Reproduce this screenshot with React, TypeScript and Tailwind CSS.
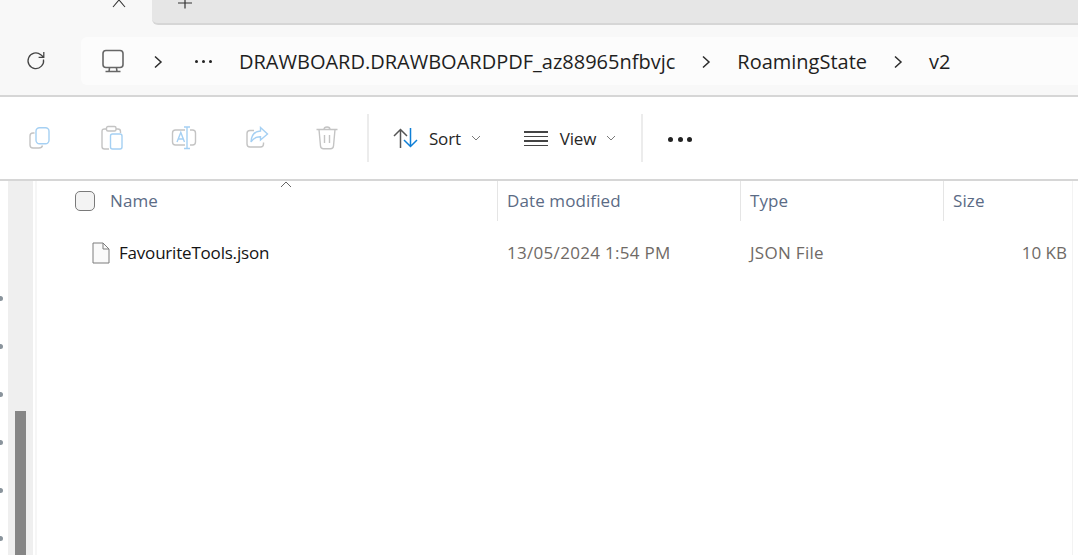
const font = { fontFamily: '"Open Sans", "Noto Sans", sans-serif' };

function Chevron() {
  return (
    <svg width="10" height="14" viewBox="0 0 10 14" fill="none" stroke="#2b2b2b" strokeWidth="1.5" className="shrink-0 mt-[2px]">
      <path d="M2 1.5 L8 7 L2 12.5" />
    </svg>
  );
}

function SmallChevron() {
  return (
    <svg width="10" height="6" viewBox="0 0 10 6" fill="none" stroke="#7a7a7a" strokeWidth="1" className="shrink-0">
      <path d="M1 1 L5 5 L9 1" />
    </svg>
  );
}

function CopyIcon() {
  return (
    <svg width="24" height="24" viewBox="0 0 24 24" fill="none" strokeWidth="1.4">
      <path d="M6.5 7 H5 Q2 7 2 10 V19 Q2 22 5 22 H11 Q14 22 14.5 19.5" stroke="#c4c4c4" />
      <rect x="8" y="1.7" width="13" height="16" rx="3.5" stroke="#a5d0f3" />
    </svg>
  );
}
function PasteIcon() {
  return (
    <svg width="24" height="26" viewBox="0 0 24 26" fill="none" strokeWidth="1.4">
      <path d="M6.5 4 H4.5 Q2 4 2 6.5 V21.5 Q2 24 4.5 24 H9" stroke="#c4c4c4" />
      <path d="M16 4 H18 Q20.5 4 20.5 6.5 V8" stroke="#c4c4c4" />
      <rect x="6.5" y="1.5" width="9.5" height="4.5" rx="1.5" stroke="#c4c4c4" />
      <rect x="10.5" y="9" width="11.5" height="15" rx="2" stroke="#a5d0f3" />
    </svg>
  );
}
function RenameIcon() {
  return (
    <svg width="26" height="24" viewBox="0 0 26 24" fill="none" strokeWidth="1.4">
      <path d="M14 4 H4.5 Q1.5 4 1.5 7 V16 Q1.5 19 4.5 19 H14" stroke="#c4c4c4" />
      <path d="M19 4 H21.5 Q24.5 4 24.5 7 V16 Q24.5 19 21.5 19 H19" stroke="#c4c4c4" />
      <path d="M13 1 H19 M16 1 V22.5 M13 22.5 H19" stroke="#a5d0f3" />
      <path d="M6 16 L9.8 6.5 L13.5 16 M7.2 13 H12.4" stroke="#a5d0f3" />
    </svg>
  );
}
function ShareIcon() {
  return (
    <svg width="24" height="24" viewBox="0 0 24 24" fill="none" strokeWidth="1.4">
      <path d="M9 4.5 H5 Q2 4.5 2 7.5 V18 Q2 21 5 21 H15.5 Q18.5 21 18.5 18 V16.5" stroke="#c4c4c4" />
      <path d="M15.5 1.5 L22.5 8 L15.5 14 V10.7 Q9 10.5 6 16 Q6.5 5.5 15.5 5 Z" stroke="#a5d0f3" />
    </svg>
  );
}
function TrashIcon() {
  return (
    <svg width="22" height="24" viewBox="0 0 22 24" fill="none" stroke="#c4c4c4" strokeWidth="1.4">
      <path d="M0.5 3.5 H21.5 M8 3.5 Q8 1 11 1 Q14 1 14 3.5" />
      <path d="M3 3.5 L4.5 20 Q4.7 22.7 7.5 22.7 H14.5 Q17.3 22.7 17.5 20 L19 3.5" />
      <path d="M8.5 9 V17 M13.5 9 V17" />
    </svg>
  );
}

function ToolIcon({ children, w }: { children: React.ReactNode; w: string }) {
  return <div className={`flex items-center justify-center ${w}`}>{children}</div>;
}

function Divider() {
  return <div className="h-[48px] w-[2px] bg-[#ececec] shrink-0" />;
}

function HeaderCell({ label, w }: { label: string; w: string }) {
  return (
    <div className={`h-[40px] ${w} shrink-0 border-r border-[#e5e5e5] flex items-center pl-[9px] text-[#5b6b85] text-[17px] tracking-[0.1px]`}>
      {label}
    </div>
  );
}

export default function App() {
  return (
    <div className="w-[1078px] h-[555px] overflow-hidden bg-white flex flex-col" style={font}>
      {/* tab strip */}
      <div className="h-[25px] bg-[#f8f8f8] flex shrink-0">
        <div className="w-[152px] h-full relative shrink-0">
          <svg width="14" height="8" viewBox="0 0 14 8" fill="none" stroke="#333" strokeWidth="1.1" className="absolute left-[112px] top-0">
            <path d="M1 7 L7 0 L13 7" />
          </svg>
        </div>
        <div className="flex-1 h-[25px] bg-[#e6e6e6] border-b-2 border-[#d6d6d6] rounded-bl-[6px] relative">
          <svg width="16" height="10" viewBox="0 0 16 10" fill="none" stroke="#333" strokeWidth="1.2" className="absolute left-[25px] top-0">
            <path d="M8 0 V8.5 M1 3 H15" />
          </svg>
        </div>
      </div>

      {/* address bar */}
      <div className="h-[72px] shrink-0 bg-[#f8f8f8] border-b-2 border-[#d6d6d6] flex items-start pt-[12px]">
        <div className="w-[81px] h-[48px] flex items-center shrink-0 pl-[26px]">
          <svg width="20" height="20" viewBox="0 0 20 20" fill="none" stroke="#444" strokeWidth="1.25">
            <path d="M17.5 8.5 A7.8 7.8 0 1 1 14.8 3.8 L17.8 6.3 M17.8 1 V6.3 H12.6" />
          </svg>
        </div>
        <div className="flex-1 h-[48px] bg-[#fcfcfc] rounded-l-[6px] flex items-center text-[#1f1f1f] text-[20px]">
          <svg width="24" height="24" viewBox="0 0 24 24" fill="none" stroke="#666" strokeWidth="1.6" className="ml-[20px] shrink-0">
            <rect x="2" y="1.5" width="20" height="17" rx="3" />
            <path d="M8.5 19 L8 22.5 M15.5 19 L16 22.5 M4.5 22.5 H19.5" />
          </svg>
          <div className="ml-[28px] flex"><Chevron /></div>
          <div className="ml-[32px] flex gap-[4px] shrink-0">
            <span className="w-[3px] h-[3px] rounded-full bg-[#222]" />
            <span className="w-[3px] h-[3px] rounded-full bg-[#222]" />
            <span className="w-[3px] h-[3px] rounded-full bg-[#222]" />
          </div>
          <span className="ml-[27px] pt-[1px]">DRAWBOARD.DRAWBOARDPDF_az88965nfbvjc</span>
          <div className="ml-[26px] flex"><Chevron /></div>
          <span className="ml-[26px] pt-[1px]">RoamingState</span>
          <div className="ml-[26px] flex"><Chevron /></div>
          <span className="ml-[26px] pt-[1px]">v2</span>
        </div>
      </div>

      {/* toolbar */}
      <div className="h-[84px] shrink-0 bg-white border-b-2 border-[#d6d6d6] flex items-center text-[#262626] text-[17px] tracking-[-0.2px]">
        <div className="flex items-center ml-[28px] gap-[47.5px]">
          <ToolIcon w="w-[24px]"><CopyIcon /></ToolIcon>
          <ToolIcon w="w-[24px]"><PasteIcon /></ToolIcon>
          <ToolIcon w="w-[26px]"><RenameIcon /></ToolIcon>
          <ToolIcon w="w-[24px]"><ShareIcon /></ToolIcon>
          <ToolIcon w="w-[22px]"><TrashIcon /></ToolIcon>
        </div>
        <div className="ml-[29px]"><Divider /></div>
        <svg width="26" height="20" viewBox="0 0 26 20" fill="none" strokeWidth="1.5" className="ml-[24px] shrink-0">
          <path d="M7.5 20 V1.5 M1 8 L7.5 1.5 L14 8" stroke="#555" />
          <path d="M17.5 0 V18.5 M11 12 L17.5 18.5 L24 12" stroke="#0f7fd6" />
        </svg>
        <span className="ml-[10px] pt-[2px]">Sort</span>
        <div className="ml-[10px]"><SmallChevron /></div>
        <div className="ml-[43px] flex flex-col gap-[3px] w-[24px] shrink-0 pt-[1px]">
          <span className="h-[1.5px] bg-[#444]" />
          <span className="h-[1.5px] bg-[#444]" />
          <span className="h-[1.5px] bg-[#444]" />
          <span className="h-[1.5px] bg-[#444]" />
        </div>
        <span className="ml-[12px] pt-[2px]">View</span>
        <div className="ml-[10px]"><SmallChevron /></div>
        <div className="ml-[25px]"><Divider /></div>
        <div className="ml-[25px] flex gap-[4.5px] shrink-0 pt-[2px]">
          <span className="w-[5px] h-[5px] rounded-full bg-[#222]" />
          <span className="w-[5px] h-[5px] rounded-full bg-[#222]" />
          <span className="w-[5px] h-[5px] rounded-full bg-[#222]" />
        </div>
      </div>

      {/* body */}
      <div className="flex-1 flex min-h-0">
        {/* nav edge with tree chevrons */}
        <div className="w-[8px] shrink-0 flex flex-col items-start pt-[115px] gap-[43px]">
          {[0, 1, 2, 3, 4, 5].map((i) => (
            <span key={i} className="w-[3px] h-[5px] rounded-r-full bg-[#8a949c]" />
          ))}
        </div>
        {/* scrollbar */}
        <div className="w-[25px] shrink-0 bg-[#efefef] flex flex-col justify-end items-center pr-[1px]">
          <div className="w-[11px] h-[144px] bg-[#868686]" />
        </div>
        <div className="w-[2px] shrink-0 bg-white" />
        <div className="w-[2px] shrink-0 bg-[#f6f6f6]" />

        {/* file pane */}
        <div className="w-[1036px] shrink-0 border-r border-[#f3f3f3] flex flex-col relative">
          <svg width="12" height="7" viewBox="0 0 12 7" fill="none" stroke="#666" strokeWidth="1" className="absolute left-[243px] top-0">
            <path d="M1 6 L6 1 L11 6" />
          </svg>
          <div className="flex h-[40px] shrink-0">
            <div className="w-[461px] h-[40px] shrink-0 border-r border-[#e5e5e5] flex items-center">
              <span className="ml-[38px] w-[20px] h-[20px] rounded-[5px] border border-[#7a7a7a] bg-[#f3f3f3] shrink-0" />
              <span className="ml-[15px] text-[#5b6b85] text-[17px] tracking-[0.1px]">Name</span>
            </div>
            <HeaderCell label="Date modified" w="w-[243px]" />
            <HeaderCell label="Type" w="w-[203px]" />
            <div className="h-[40px] flex-1 flex items-center pl-[9px] text-[#5b6b85] text-[17px] tracking-[0.1px]">Size</div>
          </div>
          <div className="flex items-center h-[63px] shrink-0 text-[17px] tracking-[0.3px]">
            <div className="w-[461px] shrink-0 flex items-center">
              <svg width="18" height="22" viewBox="0 0 18 22" fill="none" stroke="#7c7c7c" strokeWidth="1" className="ml-[55px] shrink-0">
                <path d="M1 1 H11 L17 7 V21 H1 Z" fill="#fafafa" />
                <path d="M11 1 V7 H17" />
              </svg>
              <span className="ml-[9px] text-[#141414] tracking-[-0.2px]">FavouriteTools.json</span>
            </div>
            <div className="w-[243px] shrink-0 pl-[9px] text-[#6f6a66]">13/05/2024 1:54 PM</div>
            <div className="w-[203px] shrink-0 pl-[9px] text-[#6f6a66]">JSON File</div>
            <div className="w-[123px] shrink-0 text-right text-[#6f6a66] tracking-normal">10 KB</div>
          </div>
        </div>
      </div>
    </div>
  );
}
